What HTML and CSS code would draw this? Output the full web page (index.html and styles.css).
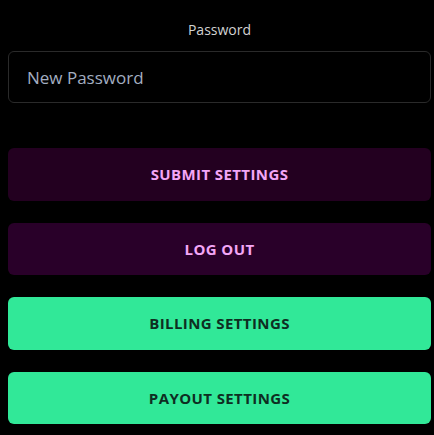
FILE: index.html
```html
<!DOCTYPE html>
<html lang="en">
<head>
<meta charset="utf-8">
<title>Settings</title>
<link rel="stylesheet" href="styles.css">
</head>
<body>
<form class="settings">
  <label class="field-label" for="pw">Password</label>
  <input class="field-input" id="pw" type="password" placeholder="New Password">
  <div class="actions">
    <button type="button" class="btn btn-dark">Submit Settings</button>
    <button type="button" class="btn btn-dark btn-logout">Log Out</button>
    <button type="button" class="btn btn-green">Billing Settings</button>
    <button type="button" class="btn btn-green">Payout Settings</button>
  </div>
</form>
</body>
</html>
```
FILE: styles.css
```css
html, body {
  margin: 0;
  background: #000;
}
body {
  font-family: "Open Sans", "Noto Sans", sans-serif;
}
.settings {
  display: flex;
  flex-direction: column;
  padding: 20px 3px 0 8px;
}
.field-label {
  display: block;
  text-align: center;
  color: #d2d2d2;
  font-size: 14px;
  line-height: 20px;
  margin-bottom: 11px;
}
.field-input {
  box-sizing: border-box;
  height: 52px;
  width: 100%;
  background: #000;
  border: 1px solid #2a2a2a;
  border-radius: 6px;
  padding: 0 18px;
  font-family: inherit;
  font-size: 17px;
  color: #e0e0e0;
  outline: none;
}
.field-input::placeholder {
  color: #a3aec0;
}
.actions {
  display: flex;
  flex-direction: column;
  gap: 22px;
  margin-top: 45px;
}
.btn {
  height: 52.5px;
  border: none;
  border-radius: 6px;
  font-family: inherit;
  font-size: 15px;
  font-weight: 700;
  text-transform: uppercase;
  letter-spacing: 0.4px;
  cursor: pointer;
}
.btn-dark {
  background: #230020;
  color: #f3a6f6;
}
.btn-logout {
  background: #290029;
}
.btn-green {
  background: #31e898;
  color: #0e2e22;
}
```
